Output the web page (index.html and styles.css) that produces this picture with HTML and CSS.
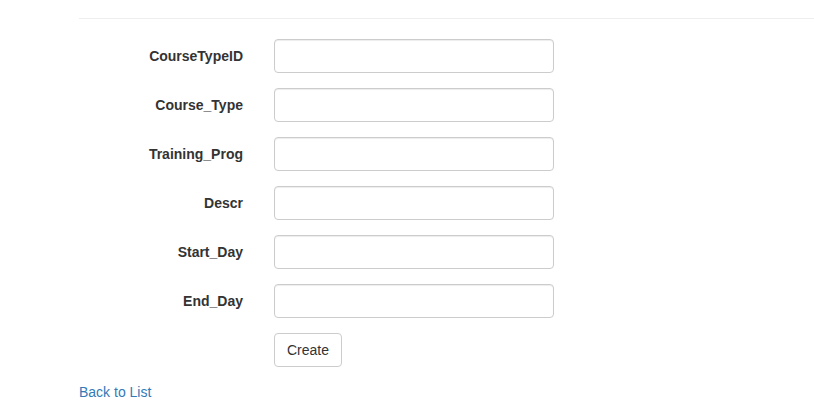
FILE: index.html
```html
<!DOCTYPE html>
<html>
<head>
<meta charset="utf-8">
<link rel="stylesheet" href="styles.css">
</head>
<body>
<div class="page">
  <hr class="rule">
  <form class="form">
    <div class="form-group">
      <label class="label">CourseTypeID</label>
      <input class="input" type="text">
    </div>
    <div class="form-group">
      <label class="label">Course_Type</label>
      <input class="input" type="text">
    </div>
    <div class="form-group">
      <label class="label">Training_Prog</label>
      <input class="input" type="text">
    </div>
    <div class="form-group">
      <label class="label">Descr</label>
      <input class="input" type="text">
    </div>
    <div class="form-group">
      <label class="label">Start_Day</label>
      <input class="input" type="text">
    </div>
    <div class="form-group">
      <label class="label">End_Day</label>
      <input class="input" type="text">
    </div>
    <div class="form-group">
      <span class="label"></span>
      <button class="btn" type="button">Create</button>
    </div>
  </form>
  <div class="back"><a class="link" href="#">Back to List</a></div>
</div>
</body>
</html>
```

FILE: styles.css
```css
html, body {
  margin: 0;
  padding: 0;
  background: #fff;
}
body {
  font-family: "Liberation Sans", Arial, Helvetica, sans-serif;
  font-size: 14px;
  line-height: 20px;
  color: #333;
}
.page {
  padding-left: 79px;
}
.rule {
  margin: 18px 0 20px 0;
  border: 0;
  border-top: 1px solid #eee;
  height: 0;
}
.form {
  margin: 0;
}
.form-group {
  display: flex;
  align-items: flex-start;
  margin-bottom: 15px;
}
.label {
  width: 164px;
  margin-right: 31px;
  padding-top: 7px;
  text-align: right;
  font-weight: bold;
  display: block;
}
.input {
  box-sizing: border-box;
  width: 280px;
  height: 34px;
  margin: 0;
  padding: 6px 12px;
  border: 1px solid #ccc;
  border-radius: 4px;
  box-shadow: inset 0 1px 1px rgba(0,0,0,.075);
  font-family: inherit;
  font-size: 14px;
  color: #555;
  background: #fff;
}
.btn {
  box-sizing: border-box;
  height: 34px;
  margin: 0;
  padding: 6px 12px;
  border: 1px solid #ccc;
  border-radius: 4px;
  background: #fff;
  color: #333;
  font-family: inherit;
  font-size: 14px;
  line-height: 20px;
}
.back {
  line-height: 20px;
}
.link {
  color: #337ab7;
  text-decoration: none;
}
```
